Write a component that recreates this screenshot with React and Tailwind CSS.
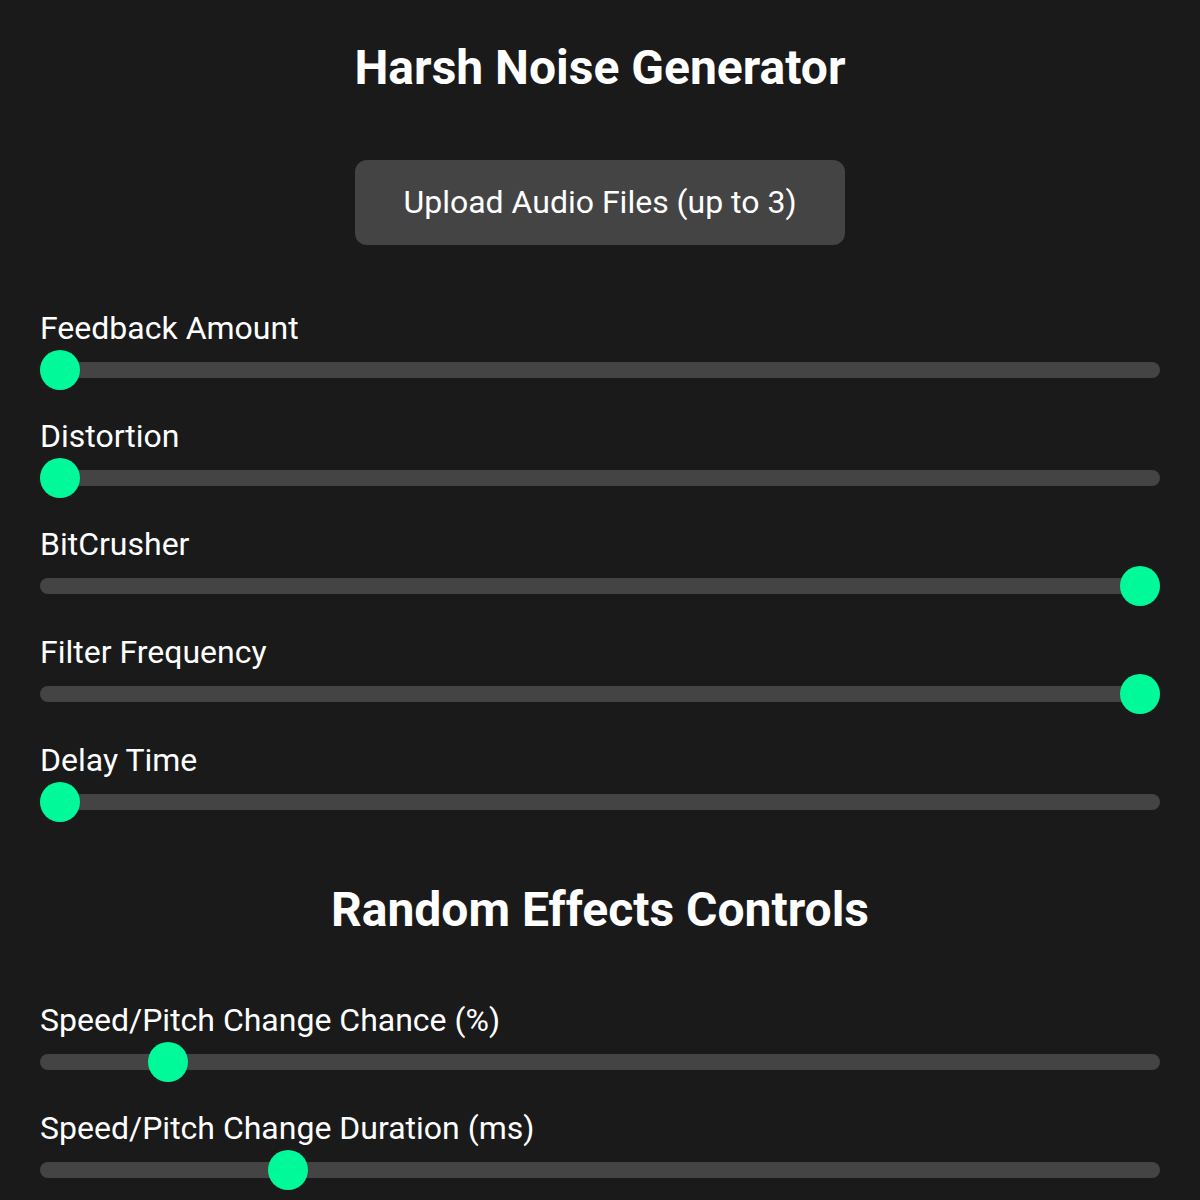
import React, { useState } from "react";

const sliderClass =
  "block w-full h-4 mt-[15px] appearance-none bg-[#444] rounded-full outline-none cursor-pointer " +
  "[&::-webkit-slider-thumb]:appearance-none [&::-webkit-slider-thumb]:w-10 [&::-webkit-slider-thumb]:h-10 " +
  "[&::-webkit-slider-thumb]:rounded-full [&::-webkit-slider-thumb]:bg-[#00fa9a] [&::-webkit-slider-thumb]:border-0 " +
  "[&::-moz-range-thumb]:w-10 [&::-moz-range-thumb]:h-10 [&::-moz-range-thumb]:rounded-full " +
  "[&::-moz-range-thumb]:bg-[#00fa9a] [&::-moz-range-thumb]:border-0";

const Slider = ({ label, min, max, step, value, onChange }) => (
  <div>
    <label className="block text-[32px] leading-[37px]">{label}</label>
    <input
      type="range"
      min={min}
      max={max}
      step={step}
      value={value}
      onChange={(e) => onChange(Number(e.target.value))}
      className={sliderClass}
    />
  </div>
);

const App = () => {
  const [feedback, setFeedback] = useState(0);
  const [distortion, setDistortion] = useState(0);
  const [bitCrusher, setBitCrusher] = useState(16);
  const [filterFreq, setFilterFreq] = useState(20000);
  const [delayTime, setDelayTime] = useState(0);
  const [pitchChance, setPitchChance] = useState(10);
  const [pitchDuration, setPitchDuration] = useState(290);

  return (
    <div
      className="min-h-screen bg-[#1a1a1a] text-white px-10 pt-10 pb-10"
      style={{ fontFamily: "Roboto, 'Liberation Sans', sans-serif" }}
    >
      <h1 className="text-[48px] leading-[56px] font-bold text-center">
        Harsh Noise Generator
      </h1>

      <div className="flex justify-center mt-16">
        <button className="bg-[#444] text-white text-[32px] leading-[37px] px-12 py-6 rounded-xl">
          Upload Audio Files (up to 3)
        </button>
      </div>

      {/* main effects */}
      <div className="flex flex-col gap-10 mt-[65px]">
        <Slider label="Feedback Amount" min={0} max={1} step={0.01} value={feedback} onChange={setFeedback} />
        <Slider label="Distortion" min={0} max={1} step={0.01} value={distortion} onChange={setDistortion} />
        <Slider label="BitCrusher" min={1} max={16} step={1} value={bitCrusher} onChange={setBitCrusher} />
        <Slider label="Filter Frequency" min={20} max={20000} step={1} value={filterFreq} onChange={setFilterFreq} />
        <Slider label="Delay Time" min={0} max={1} step={0.01} value={delayTime} onChange={setDelayTime} />
      </div>

      <h2 className="text-[48px] leading-[56px] font-bold text-center mt-[72px]">
        Random Effects Controls
      </h2>

      <div className="flex flex-col gap-10 mt-16">
        <Slider
          label="Speed/Pitch Change Chance (%)"
          min={0}
          max={100}
          step={1}
          value={pitchChance}
          onChange={setPitchChance}
        />
        <Slider
          label="Speed/Pitch Change Duration (ms)"
          min={100}
          max={1000}
          step={10}
          value={pitchDuration}
          onChange={setPitchDuration}
        />
      </div>
    </div>
  );
};

export default App;
